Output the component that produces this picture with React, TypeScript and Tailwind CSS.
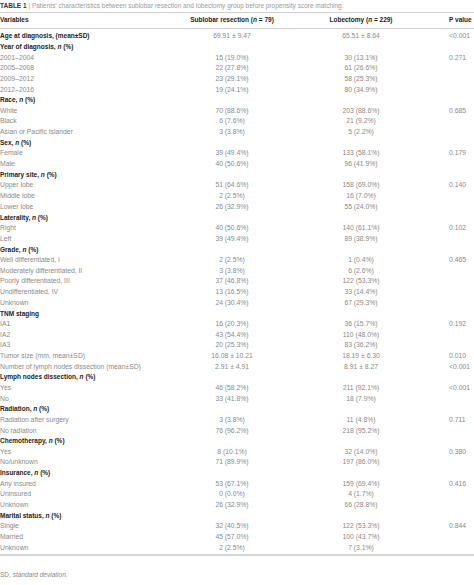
type Row = {
  label: string
  a?: string
  b?: string
  p?: string
  head?: boolean
  pct?: boolean
}

const rows: Row[] = [
  { label: 'Age at diagnosis, (mean±SD)', a: '69.91 ± 9.47', b: '65.51 ± 8.64', p: '<0.001', head: true },
  { label: 'Year of diagnosis', head: true, pct: true },
  { label: '2001–2004', a: '15 (19.0%)', b: '30 (13.1%)', p: '0.271' },
  { label: '2005–2008', a: '22 (27.8%)', b: '61 (26.6%)' },
  { label: '2009–2012', a: '23 (29.1%)', b: '58 (25.3%)' },
  { label: '2012–2016', a: '19 (24.1%)', b: '80 (34.9%)' },
  { label: 'Race', head: true, pct: true },
  { label: 'White', a: '70 (88.6%)', b: '203 (88.6%)', p: '0.685' },
  { label: 'Black', a: '6 (7.6%)', b: '21 (9.2%)' },
  { label: 'Asian or Pacific Islander', a: '3 (3.8%)', b: '5 (2.2%)' },
  { label: 'Sex', head: true, pct: true },
  { label: 'Female', a: '39 (49.4%)', b: '133 (58.1%)', p: '0.179' },
  { label: 'Male', a: '40 (50.6%)', b: '96 (41.9%)' },
  { label: 'Primary site', head: true, pct: true },
  { label: 'Upper lobe', a: '51 (64.6%)', b: '158 (69.0%)', p: '0.140' },
  { label: 'Middle lobe', a: '2 (2.5%)', b: '16 (7.0%)' },
  { label: 'Lower lobe', a: '26 (32.9%)', b: '55 (24.0%)' },
  { label: 'Laterality', head: true, pct: true },
  { label: 'Right', a: '40 (50.6%)', b: '140 (61.1%)', p: '0.102' },
  { label: 'Left', a: '39 (49.4%)', b: '89 (38.9%)' },
  { label: 'Grade', head: true, pct: true },
  { label: 'Well differentiated, I', a: '2 (2.5%)', b: '1 (0.4%)', p: '0.465' },
  { label: 'Moderately differentiated, II', a: '3 (3.8%)', b: '6 (2.6%)' },
  { label: 'Poorly differentiated, III', a: '37 (46.8%)', b: '122 (53.3%)' },
  { label: 'Undifferentiated, IV', a: '13 (16.5%)', b: '33 (14.4%)' },
  { label: 'Unknown', a: '24 (30.4%)', b: '67 (29.3%)' },
  { label: 'TNM staging', head: true },
  { label: 'IA1', a: '16 (20.3%)', b: '36 (15.7%)', p: '0.192' },
  { label: 'IA2', a: '43 (54.4%)', b: '110 (48.0%)' },
  { label: 'IA3', a: '20 (25.3%)', b: '83 (36.2%)' },
  { label: 'Tumor size (mm, mean±SD)', a: '16.08 ± 10.21', b: '18.19 ± 6.30', p: '0.010' },
  { label: 'Number of lymph nodes dissection (mean±SD)', a: '2.91 ± 4.91', b: '8.91 ± 8.27', p: '<0.001' },
  { label: 'Lymph nodes dissection', head: true, pct: true },
  { label: 'Yes', a: '46 (58.2%)', b: '211 (92.1%)', p: '<0.001' },
  { label: 'No', a: '33 (41.8%)', b: '18 (7.9%)' },
  { label: 'Radiation', head: true, pct: true },
  { label: 'Radiation after surgery', a: '3 (3.8%)', b: '11 (4.8%)', p: '0.711' },
  { label: 'No radiation', a: '76 (96.2%)', b: '218 (95.2%)' },
  { label: 'Chemotherapy', head: true, pct: true },
  { label: 'Yes', a: '8 (10.1%)', b: '32 (14.0%)', p: '0.380' },
  { label: 'No/unknown', a: '71 (89.9%)', b: '197 (86.0%)' },
  { label: 'Insurance', head: true, pct: true },
  { label: 'Any insured', a: '53 (67.1%)', b: '159 (69.4%)', p: '0.416' },
  { label: 'Uninsured', a: '0 (0.0%)', b: '4 (1.7%)' },
  { label: 'Unknown', a: '26 (32.9%)', b: '66 (28.8%)' },
  { label: 'Marital status', head: true, pct: true },
  { label: 'Single', a: '32 (40.5%)', b: '122 (53.3%)', p: '0.844' },
  { label: 'Married', a: '45 (57.0%)', b: '100 (43.7%)' },
  { label: 'Unknown', a: '2 (2.5%)', b: '7 (3.1%)' },
]

const cols = 'grid grid-cols-[170px_124px_134px_1fr] items-center'

export default function App() {
  return (
    <div
      className="w-[474px] h-[585px] overflow-hidden bg-white whitespace-nowrap text-[#8a8a8a]"
      style={{ fontFamily: '"Liberation Sans", Arial, sans-serif' }}
    >
      {/* caption */}
      <div className="h-[12px] leading-[12px] text-[6.5px] text-[#9a9a9a]">
        <span className="font-bold text-[#333]">TABLE 1</span> | Patients' characteristics between sublobar resection and lobectomy group before propensity score matching.
      </div>

      <div className="w-[600px] border-t border-[#d2d2d2]">
        {/* header */}
        <div className={`${cols} h-[16px] border-b border-[#d2d2d2] text-[6.5px] font-bold text-[#222] pb-[1px]`}>
          <div>Variables</div>
          <div className="text-center">
            Sublobar resection (<i>n</i> = 79)
          </div>
          <div className="text-center">
            Lobectomy (<i>n</i> = 229)
          </div>
          <div className="pl-[21px]">P value</div>
        </div>

        {/* body */}
        <div className="pt-[2px] pb-[1px] border-b-2 border-[#d6d6d6]">
          {rows.map((r, i) => (
            <div key={i} className={`${cols} h-[10.667px] text-[6.8px]`}>
              {r.head ? (
                <div className="text-[6.5px] font-bold text-[#222]">
                  {r.label}
                  {r.pct && (
                    <>
                      , <i>n</i> (%)
                    </>
                  )}
                </div>
              ) : (
                <div>{r.label}</div>
              )}
              <div className="text-center">{r.a}</div>
              <div className="text-center">{r.b}</div>
              <div className="pl-[21px]">{r.p}</div>
            </div>
          ))}
        </div>
      </div>

      <div className="mt-[14px] text-[6.5px] text-[#8a8a8a]">
        SD, <i>standard deviation.</i>
      </div>
    </div>
  )
}
